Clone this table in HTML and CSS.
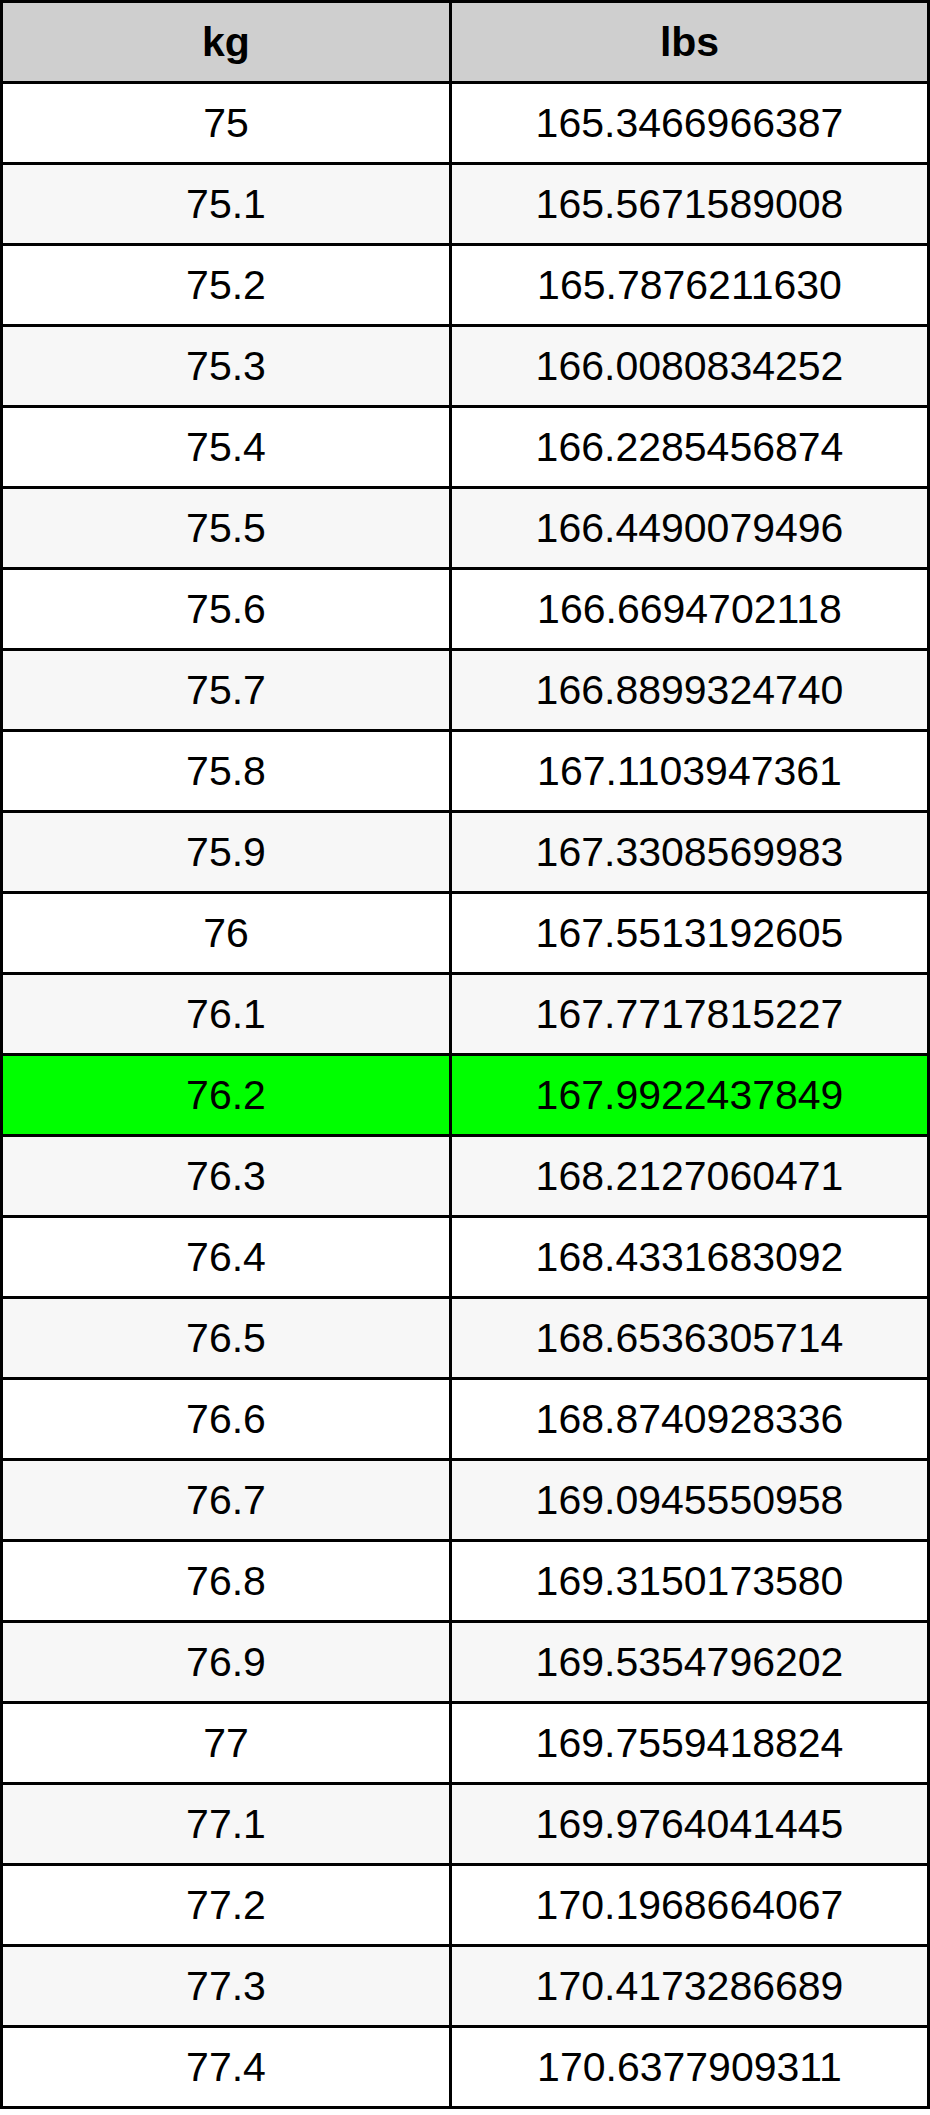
FILE: index.html
```html
<!DOCTYPE html>
<html>
<head>
<meta charset="utf-8">
<title>kg to lbs</title>
<link rel="stylesheet" href="styles.css">
</head>
<body>
<table class="conv">
<thead>
<tr><th class="kg">kg</th><th class="lbs">lbs</th></tr>
</thead>
<tbody>
<tr><td class="kg">75</td><td class="lbs">165.3466966387</td></tr>
<tr><td class="kg">75.1</td><td class="lbs">165.5671589008</td></tr>
<tr><td class="kg">75.2</td><td class="lbs">165.7876211630</td></tr>
<tr><td class="kg">75.3</td><td class="lbs">166.0080834252</td></tr>
<tr><td class="kg">75.4</td><td class="lbs">166.2285456874</td></tr>
<tr><td class="kg">75.5</td><td class="lbs">166.4490079496</td></tr>
<tr><td class="kg">75.6</td><td class="lbs">166.6694702118</td></tr>
<tr><td class="kg">75.7</td><td class="lbs">166.8899324740</td></tr>
<tr><td class="kg">75.8</td><td class="lbs">167.1103947361</td></tr>
<tr><td class="kg">75.9</td><td class="lbs">167.3308569983</td></tr>
<tr><td class="kg">76</td><td class="lbs">167.5513192605</td></tr>
<tr><td class="kg">76.1</td><td class="lbs">167.7717815227</td></tr>
<tr class="hl"><td class="kg">76.2</td><td class="lbs">167.9922437849</td></tr>
<tr><td class="kg">76.3</td><td class="lbs">168.2127060471</td></tr>
<tr><td class="kg">76.4</td><td class="lbs">168.4331683092</td></tr>
<tr><td class="kg">76.5</td><td class="lbs">168.6536305714</td></tr>
<tr><td class="kg">76.6</td><td class="lbs">168.8740928336</td></tr>
<tr><td class="kg">76.7</td><td class="lbs">169.0945550958</td></tr>
<tr><td class="kg">76.8</td><td class="lbs">169.3150173580</td></tr>
<tr><td class="kg">76.9</td><td class="lbs">169.5354796202</td></tr>
<tr><td class="kg">77</td><td class="lbs">169.7559418824</td></tr>
<tr><td class="kg">77.1</td><td class="lbs">169.9764041445</td></tr>
<tr><td class="kg">77.2</td><td class="lbs">170.1968664067</td></tr>
<tr><td class="kg">77.3</td><td class="lbs">170.4173286689</td></tr>
<tr><td class="kg">77.4</td><td class="lbs">170.6377909311</td></tr>
</tbody>
</table>
</body>
</html>
```

FILE: styles.css
```css
html, body {
  margin: 0;
  padding: 0;
  background: #ffffff;
}

.conv {
  table-layout: fixed;
  width: 930px;
  border-collapse: separate;
  border-spacing: 0;
  border-left: 3px solid #000;
  border-top: 3px solid #000;
  font-family: "Liberation Sans", Arial, sans-serif;
  font-size: 41px;
  color: #000;
}

.conv th,
.conv td {
  height: 78px;
  padding: 0;
  border-right: 3px solid #000;
  border-bottom: 3px solid #000;
  text-align: center;
  vertical-align: middle;
  white-space: nowrap;
}

.conv .kg {
  width: 446px;
}

.conv .lbs {
  width: 475px;
}

.conv th {
  background: #cfcfcf;
  font-weight: bold;
}

.conv tbody tr:nth-child(odd) td {
  background: #ffffff;
}

.conv tbody tr:nth-child(even) td {
  background: #f7f7f7;
}

.conv tbody tr.hl td {
  background: #00ff00;
}
```
